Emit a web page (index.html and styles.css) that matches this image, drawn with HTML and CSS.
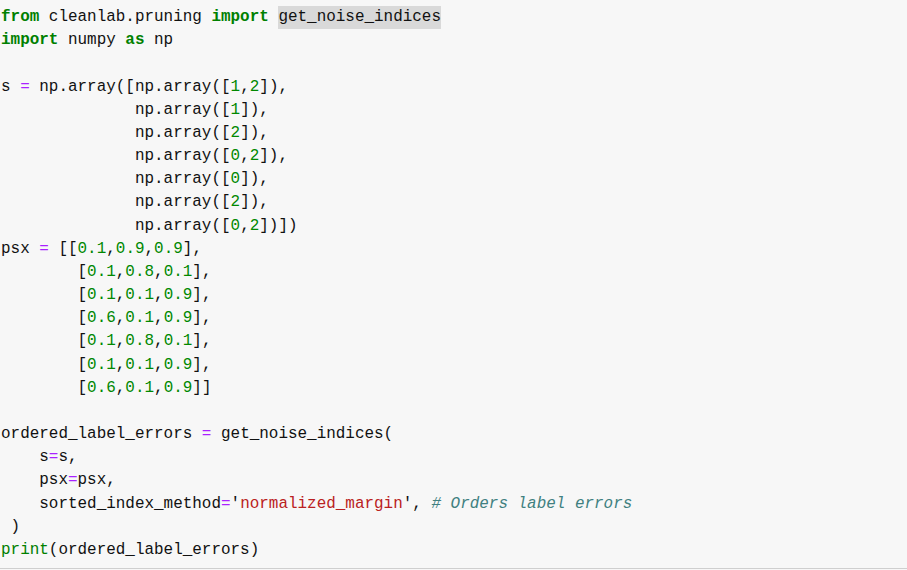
FILE: index.html
```html
<!DOCTYPE html>
<html>
<head>
<meta charset="utf-8">
<link rel="stylesheet" href="styles.css">
</head>
<body>
<div class="cell">
<pre class="code"><span class="k">from</span> cleanlab.pruning <span class="k">import</span> <span class="hl">get_noise_indices</span>
<span class="k">import</span> numpy <span class="k">as</span> np

s <span class="o">=</span> np.array([np.array([<span class="m">1</span>,<span class="m">2</span>]),
              np.array([<span class="m">1</span>]),
              np.array([<span class="m">2</span>]),
              np.array([<span class="m">0</span>,<span class="m">2</span>]),
              np.array([<span class="m">0</span>]),
              np.array([<span class="m">2</span>]),
              np.array([<span class="m">0</span>,<span class="m">2</span>])])
psx <span class="o">=</span> [[<span class="m">0.1</span>,<span class="m">0.9</span>,<span class="m">0.9</span>],
        [<span class="m">0.1</span>,<span class="m">0.8</span>,<span class="m">0.1</span>],
        [<span class="m">0.1</span>,<span class="m">0.1</span>,<span class="m">0.9</span>],
        [<span class="m">0.6</span>,<span class="m">0.1</span>,<span class="m">0.9</span>],
        [<span class="m">0.1</span>,<span class="m">0.8</span>,<span class="m">0.1</span>],
        [<span class="m">0.1</span>,<span class="m">0.1</span>,<span class="m">0.9</span>],
        [<span class="m">0.6</span>,<span class="m">0.1</span>,<span class="m">0.9</span>]]

ordered_label_errors <span class="o">=</span> get_noise_indices(
    s<span class="o">=</span>s,
    psx<span class="o">=</span>psx,
    sorted_index_method<span class="o">=</span>'<span class="s">normalized_margin</span>', <span class="c"># Orders label errors</span>
 )
<span class="nb">print</span>(ordered_label_errors)</pre>
</div>
</body>
</html>
```
FILE: styles.css
```css
html, body {
  margin: 0;
  padding: 0;
  background: #f7f7f7;
}
.cell {
  width: 907px;
  height: 569px;
  box-sizing: border-box;
  background: #f7f7f7;
  border-bottom: 1px solid #cfcfcf;
  padding: 6px 0 0 1px;
}
.code {
  margin: 0;
  font-family: "Liberation Mono", monospace;
  font-size: 15.95px;
  line-height: 23.17px;
  color: #111;
}
.k { color: #008000; font-weight: bold; }
.o { color: #aa22ff; }
.m { color: #008800; }
.s { color: #ba2121; }
.c { color: #408080; font-style: italic; }
.nb { color: #008000; }
.hl { background: #d9d9d9; display: inline-block; }
```
